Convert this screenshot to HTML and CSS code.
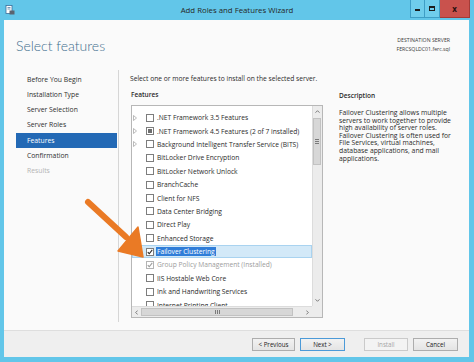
FILE: index.html
```html
<!DOCTYPE html>
<html lang="en">
<head>
  <meta charset="UTF-8" />
  <title>Add Roles and Features Wizard</title>
  <link rel="stylesheet" href="styles.css">
</head>
<body>
  <div class="window">
    <div class="titlebar">
      <div class="app-icon">
        <svg width="10" height="10" viewBox="0 0 10 10">
          <rect x="1" y="0.5" width="6" height="8" fill="#fff" stroke="#3b6d9a" stroke-width="0.8"/>
          <path d="M2.5 2.5h3M2.5 4h3" stroke="#3b6d9a" stroke-width="0.7"/>
          <rect x="4.5" y="5.5" width="5" height="4" fill="#5a6470"/>
        </svg>
      </div>
      <div class="title">Add Roles and Features Wizard</div>
      <div class="controls">
        <span class="ctl min"><i></i></span>
        <span class="ctl max"><i></i></span>
        <span class="ctl close">x</span>
      </div>
    </div>

    <div class="client">
      <div class="header">
        <h1>Select features</h1>
        <div class="dest">DESTINATION SERVER<br>FERCSQLDC01.ferc.sql</div>
      </div>

      <div class="main">
        <ul class="steps">
          <li>Before You Begin</li>
          <li>Installation Type</li>
          <li>Server Selection</li>
          <li>Server Roles</li>
          <li class="active">Features</li>
          <li>Confirmation</li>
          <li class="off">Results</li>
        </ul>

        <div class="page">
          <p class="intro">Select one or more features to install on the selected server.</p>
          <div class="columns">
            <div class="features">
              <div class="label">Features</div>
              <div class="tree">
                <div class="rows">
                  <div class="row"><span class="exp"><svg width="4" height="6" viewBox="0 0 4 6"><path d="M0.5 0.5L3.5 3L0.5 5.5Z" fill="none" stroke="#a9a9a9" stroke-width="0.8"/></svg></span><span class="cb"></span>.NET Framework 3.5 Features</div>
                  <div class="row"><span class="exp"><svg width="4" height="6" viewBox="0 0 4 6"><path d="M0.5 0.5L3.5 3L0.5 5.5Z" fill="none" stroke="#a9a9a9" stroke-width="0.8"/></svg></span><span class="cb partial"></span>.NET Framework 4.5 Features (2 of 7 installed)</div>
                  <div class="row"><span class="exp"><svg width="4" height="6" viewBox="0 0 4 6"><path d="M0.5 0.5L3.5 3L0.5 5.5Z" fill="none" stroke="#a9a9a9" stroke-width="0.8"/></svg></span><span class="cb"></span>Background Intelligent Transfer Service (BITS)</div>
                  <div class="row"><span class="exp"></span><span class="cb"></span>BitLocker Drive Encryption</div>
                  <div class="row"><span class="exp"></span><span class="cb"></span>BitLocker Network Unlock</div>
                  <div class="row"><span class="exp"></span><span class="cb"></span>BranchCache</div>
                  <div class="row"><span class="exp"></span><span class="cb"></span>Client for NFS</div>
                  <div class="row"><span class="exp"></span><span class="cb"></span>Data Center Bridging</div>
                  <div class="row"><span class="exp"></span><span class="cb"></span>Direct Play</div>
                  <div class="row"><span class="exp"></span><span class="cb"></span>Enhanced Storage</div>
                  <div class="row selected"><span class="exp"></span><span class="cb"><svg width="6" height="6" viewBox="0 0 8 8"><path d="M1 4.2L3 6.3L7 1.2" fill="none" stroke="#222" stroke-width="1.4"/></svg></span><span class="hl">Failover Clustering</span></div>
                  <div class="row disabled"><span class="exp"></span><span class="cb"><svg width="6" height="6" viewBox="0 0 8 8"><path d="M1 4.2L3 6.3L7 1.2" fill="none" stroke="#9a9a9a" stroke-width="1.4"/></svg></span>Group Policy Management (Installed)</div>
                  <div class="row"><span class="exp"></span><span class="cb"></span>IIS Hostable Web Core</div>
                  <div class="row"><span class="exp"></span><span class="cb"></span>Ink and Handwriting Services</div>
                  <div class="row"><span class="exp"></span><span class="cb"></span>Internet Printing Client</div>
                </div>
                <div class="vscroll">
                  <span class="sarrow"><svg width="5" height="3" viewBox="0 0 5 3"><path d="M0.5 2.7L2.5 0.7L4.5 2.7" fill="none" stroke="#606060" stroke-width="0.8"/></svg></span>
                  <span class="thumb vthumb"><i></i><i></i><i></i></span>
                  <span class="fill"></span>
                  <span class="sarrow"><svg width="5" height="3" viewBox="0 0 5 3"><path d="M0.5 0.3L2.5 2.3L4.5 0.3" fill="none" stroke="#606060" stroke-width="0.8"/></svg></span>
                </div>
                <div class="hscroll">
                  <span class="sarrow"><svg width="3" height="5" viewBox="0 0 3 5"><path d="M2.7 0.5L0.7 2.5L2.7 4.5" fill="none" stroke="#606060" stroke-width="0.8"/></svg></span>
                  <span class="thumb hthumb"><i></i><i></i><i></i></span>
                  <span class="fill"></span>
                  <span class="sarrow"><svg width="3" height="5" viewBox="0 0 3 5"><path d="M0.3 0.5L2.3 2.5L0.3 4.5" fill="none" stroke="#606060" stroke-width="0.8"/></svg></span>
                </div>
                <div class="corner"></div>
              </div>
            </div>

            <div class="desc">
              <div class="label">Description</div>
              <p>Failover Clustering allows multiple servers to work together to provide high availability of server roles. Failover Clustering is often used for File Services, virtual machines, database applications, and mail applications.</p>
            </div>
          </div>
        </div>
      </div>

      <div class="footer">
        <button class="btn prev">&lt; Previous</button>
        <button class="btn next">Next &gt;</button>
        <button class="btn install" disabled>Install</button>
        <button class="btn cancel">Cancel</button>
      </div>
    </div>

    <svg class="callout" width="474" height="362" viewBox="0 0 474 362">
      <line x1="88" y1="202" x2="126" y2="237" stroke="#ea7a25" stroke-width="6" stroke-linecap="round"/>
      <polygon points="118,251 138,227 143,257" fill="#ea7a25" stroke="#ea7a25" stroke-width="1.5" stroke-linejoin="round"/>
    </svg>
  </div>
</body>
</html>
```

FILE: styles.css
```css
* {
  box-sizing: border-box;
}

body {
  margin: 0;
  font-family: "Open Sans", "Noto Sans", sans-serif;
  color: #1e1e1e;
}

.window {
  position: relative;
  width: 474px;
  height: 362px;
  background: #62c6e9;
  display: flex;
  flex-direction: column;
  overflow: hidden;
}

/* Title bar */
.titlebar {
  height: 20px;
  display: grid;
  grid-template-columns: 1fr auto 1fr;
  align-items: start;
}

.app-icon {
  padding: 5px 0 0 5px;
  line-height: 0;
}

.title {
  font-size: 7.8px;
  line-height: 20px;
  color: #262626;
}

.controls {
  justify-self: end;
  display: flex;
  margin-right: 4px;
}

.ctl {
  width: 15px;
  height: 18px;
  border: 1px solid #3e9ec6;
  border-top: none;
  background: #6fcdec;
  display: flex;
  justify-content: center;
  align-items: center;
}

.ctl + .ctl {
  border-left: none;
}

.min i {
  width: 5px;
  height: 2px;
  margin-top: 3px;
  background: #1d1d1d;
}

.max i {
  width: 6px;
  height: 5px;
  border: 1px solid #1d1d1d;
  border-top-width: 2px;
}

.close {
  width: 30px;
  background: #c9524d;
  border-color: #a33b37;
  color: #2a1010;
  font-size: 8px;
  font-weight: bold;
  line-height: 1;
}

/* Client area */
.client {
  flex: 1;
  margin: 0 5px 5px 4px;
  background: #fafafa;
  display: flex;
  flex-direction: column;
}

.header {
  height: 50px;
  display: flex;
  justify-content: space-between;
}

.header h1 {
  margin: 0;
  padding: 16px 0 0 12px;
  font-family: Lato, "Open Sans", sans-serif;
  font-weight: 300;
  font-size: 14px;
  line-height: 20px;
  color: #3f6e8e;
}

.dest {
  padding: 16px 19px 0 0;
  text-align: right;
  font-size: 5.2px;
  line-height: 8.5px;
  color: #3a3a3a;
}

.main {
  flex: 1;
  display: flex;
}

.steps {
  list-style: none;
  margin: 0 0 8px 0;
  padding: 1.5px 1px 0 12px;
  width: 115px;
  border-right: 1px solid #d6d6d6;
  font-size: 6.8px;
}

.steps li {
  height: 15.3px;
  line-height: 15.3px;
  padding-left: 11px;
  color: #2e2e2e;
}

.steps li.active {
  background: #2369b5;
  color: #fff;
}

.steps li.off {
  color: #b4b4b4;
}

.page {
  flex: 1;
  padding: 4px 0 0 11px;
}

.intro {
  margin: 0;
  font-size: 6.7px;
  line-height: 10px;
  color: #2a2a2a;
}

.columns {
  display: flex;
  gap: 16px;
}

.features {
  width: 193px;
  padding-left: 1px;
}

.label {
  margin-top: 6px;
  font-size: 6.5px;
  font-weight: 600;
  line-height: 10px;
  color: #2a2a2a;
}

/* Feature tree */
.tree {
  margin-top: 5px;
  width: 192px;
  height: 213px;
  border: 1px solid #b7b7b7;
  background: #fff;
  display: grid;
  grid-template-columns: 1fr 10px;
  grid-template-rows: 1fr 11px;
}

.rows {
  padding-top: 5px;
  overflow: hidden;
  font-size: 6.7px;
  color: #2a2a2a;
}

.row {
  height: 13.4px;
  display: flex;
  align-items: center;
  white-space: nowrap;
}

.row.selected {
  background: #d3e9f8;
  box-shadow: inset 0 0 0 1px #a9d3f0;
}

.row.disabled {
  color: #9c9c9c;
}

.exp {
  width: 14px;
  flex: none;
  padding-left: 1px;
  display: flex;
  align-items: center;
}

.cb {
  width: 8px;
  height: 8px;
  flex: none;
  margin-right: 3px;
  border: 1px solid #7d7d7d;
  background: #fff;
  display: flex;
  justify-content: center;
  align-items: center;
}

.row.disabled .cb {
  border-color: #b4b4b4;
}

.cb.partial::after {
  content: "";
  width: 4px;
  height: 4px;
  background: #6e6e6e;
}

.hl {
  background: #2f7dd8;
  color: #fff;
  padding: 0 1px;
  margin-left: -1px;
}

.vscroll,
.hscroll {
  background: #ececec;
  display: flex;
}

.vscroll {
  flex-direction: column;
  border-left: 1px solid #dcdcdc;
}

.hscroll {
  border-top: 1px solid #dcdcdc;
}

.sarrow {
  flex: none;
  display: flex;
  justify-content: center;
  align-items: center;
}

.vscroll .sarrow {
  height: 11px;
}

.hscroll .sarrow {
  width: 9px;
}

.fill {
  flex: 1;
}

.thumb {
  flex: none;
  background: #d7d7d7;
  border: 1px solid #c2c2c2;
  display: flex;
  justify-content: center;
  align-items: center;
  gap: 1px;
}

.thumb i {
  background: #7a7a7a;
}

.vthumb {
  height: 47px;
  margin: 1px 1px 0 0;
  flex-direction: column;
}

.vthumb i {
  width: 4px;
  height: 1px;
}

.hthumb {
  width: 152px;
  margin: 1px 0 1px 0;
}

.hthumb i {
  width: 1px;
  height: 4px;
}

.corner {
  background: #ececec;
}

/* Description */
.desc {
  width: 114px;
}

.desc .label {
  margin-top: 7px;
}

.desc p {
  margin: 8px 0 0;
  font-size: 6.8px;
  line-height: 7.6px;
  color: #2a2a2a;
}

/* Footer buttons */
.footer {
  height: 27px;
  border-top: 1px solid #dedede;
  background: #efefef;
  display: flex;
  justify-content: flex-end;
  align-items: flex-start;
  padding: 7px 11px 0 0;
}

.btn {
  height: 13px;
  padding: 0;
  margin-left: 5px;
  border: 1px solid #adadad;
  background: linear-gradient(#f2f2f2, #e4e4e4);
  font-family: "Open Sans", "Noto Sans", sans-serif;
  font-size: 6.2px;
  color: #222;
}

.prev {
  width: 43px;
}

.next {
  width: 45px;
  border-color: #4c9ad8;
}

.install {
  width: 44px;
  margin-left: 19px;
  border-color: #cacaca;
  background: #f3f3f3;
  color: #a5a5a5;
}

.cancel {
  width: 45px;
}

.callout {
  position: absolute;
  left: 0;
  top: 0;
  pointer-events: none;
}
```
